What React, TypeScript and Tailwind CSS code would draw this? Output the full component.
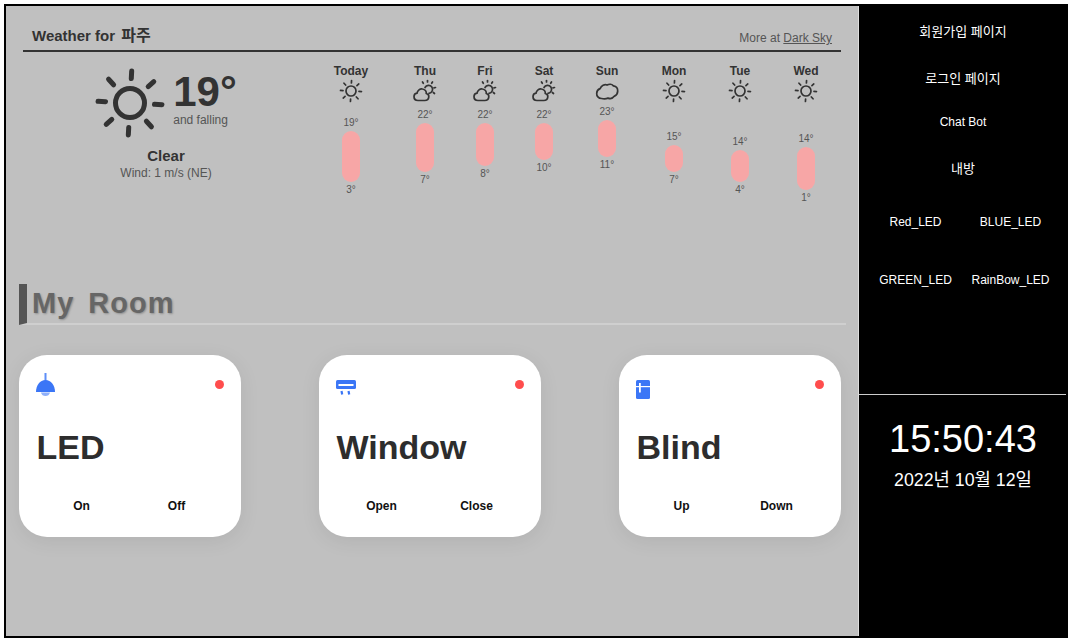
const days = [
  { name: "Today", icon: "sun", hi: "19°", lo: "3°", gap: "ml-0", top: "mt-[14px]", bar: "h-[51px]" },
  { name: "Thu", icon: "partly", hi: "22°", lo: "7°", gap: "ml-[34px]", top: "mt-[6px]", bar: "h-[49px]" },
  { name: "Fri", icon: "partly", hi: "22°", lo: "8°", gap: "ml-[20px]", top: "mt-[6px]", bar: "h-[43px]" },
  { name: "Sat", icon: "partly", hi: "22°", lo: "10°", gap: "ml-[19px]", top: "mt-[6px]", bar: "h-[37px]" },
  { name: "Sun", icon: "cloud", hi: "23°", lo: "11°", gap: "ml-[23px]", top: "mt-[3px]", bar: "h-[37px]" },
  { name: "Mon", icon: "sun", hi: "15°", lo: "7°", gap: "ml-[27px]", top: "mt-[28px]", bar: "h-[27px]" },
  { name: "Tue", icon: "sun", hi: "14°", lo: "4°", gap: "ml-[26px]", top: "mt-[33px]", bar: "h-[32px]" },
  { name: "Wed", icon: "sun", hi: "14°", lo: "1°", gap: "ml-[26px]", top: "mt-[30px]", bar: "h-[43px]" },
];

function BigSun() {
  const rays = [0, 45, 90, 135, 180, 225, 270, 315];
  return (
    <svg width="70" height="70" viewBox="0 0 70 70" fill="none" stroke="#333" strokeLinecap="round">
      <circle cx="35" cy="35" r="14.500" strokeWidth="5" />
      {rays.map((r) => (
        <line key={r} x1="35" y1="3" x2="35" y2="10.500" strokeWidth="5" transform={`rotate(${r + 3} 35 35)`} />
      ))}
    </svg>
  );
}

function DayIcon({ type }: { type: string }) {
  if (type === "sun") {
    return (
      <svg width="24" height="24" viewBox="0 0 24 24" fill="none" stroke="#333" strokeLinecap="round" strokeWidth="1.700">
        <circle cx="12" cy="12" r="5" />
        {[0, 45, 90, 135, 180, 225, 270, 315].map((r) => (
          <line key={r} x1="12" y1="1.500" x2="12" y2="4" transform={`rotate(${r + 3} 12 12)`} />
        ))}
      </svg>
    );
  }
  if (type === "cloud") {
    return (
      <svg width="24" height="24" viewBox="0 0 24 24" fill="none" stroke="#333" strokeWidth="1.700">
        <path d="M6.500 19.500c-3 0-5-2.500-4.800-5.300.1-2.400 1.600-4 3.400-4.600C6.400 6.700 9.500 5 12 6c2.200-1.200 5.200-1 6.500.9 2.600.4 4.300 2.500 4.200 5.200-.1 2.300-1.200 4.200-3.200 5-1.500 2-4 3-6.500 2-2 1-4 1-6.500.4z" />
      </svg>
    );
  }
  return (
    <svg width="24" height="24" viewBox="0 0 24 24" fill="none" stroke="#333" strokeLinecap="round" strokeWidth="1.700">
      <path d="M12 8.500a4 4 0 1 1 4 5.800" />
      <line x1="14.500" y1="1.500" x2="14.500" y2="3" />
      <line x1="9.500" y1="3" x2="10.300" y2="4.300" />
      <line x1="19.500" y1="3" x2="18.700" y2="4.300" />
      <line x1="22.500" y1="8.500" x2="21" y2="8.800" />
      <line x1="21.500" y1="14.500" x2="20.300" y2="13.500" />
      <path d="M5 21.500c-2.500 0-4-1.800-4-3.800 0-2 1.500-3.300 3-3.500.5-2.800 3-4.700 5.500-4.200 2.500.4 4 2.500 3.800 4.500 1.700.5 2.700 1.800 2.500 3.400-.2 2-1.800 3.600-4 3.600z" />
    </svg>
  );
}

function DeviceIcon({ type }: { type: string }) {
  if (type === "lamp") {
    return (
      <svg width="20" height="24" viewBox="0 0 20 24">
        <rect x="8.500" y="0" width="2" height="8" fill="#5d8ef8" />
        <path d="M0 19C0 12 4 7 9.500 7S19 12 19 19z" fill="#3b76f6" />
        <path d="M5 19.500h9c-.5 2.500-2.300 3.500-4.500 3.500S5.500 22 5 19.500z" fill="#8fb0fa" />
      </svg>
    );
  }
  if (type === "ac") {
    return (
      <svg width="21" height="24" viewBox="0 0 21 24">
        <rect x="0" y="7" width="20" height="9" rx="1.500" fill="#3b76f6" />
        <rect x="2.500" y="11" width="15" height="2" fill="#fff" />
        <path d="M5.500 18l.7 3.500M12.500 18l.7 3.500" stroke="#3b76f6" strokeWidth="2.200" />
      </svg>
    );
  }
  return (
    <svg width="20" height="26" viewBox="0 0 20 26">
      <rect x="0" y="7" width="14" height="19" rx="1.500" fill="#3b76f6" />
      <rect x="0" y="13" width="14" height="1.200" fill="#fff" />
      <rect x="3" y="10" width="1.800" height="9.500" fill="#fff" />
    </svg>
  );
}

function Card({ icon, title, a, b }: { icon: string; title: string; a: string; b: string }) {
  return (
    <div className="w-[222px] h-[182px] rounded-[28px] bg-white shadow-[0_4px_20px_rgba(0,0,0,0.08)] pt-[18px]">
      <div className="flex justify-between items-start h-[24px] pl-[17px] pr-[17px]">
        <DeviceIcon type={icon} />
        <span className="mt-[7px] w-[9px] h-[9px] rounded-full bg-[#ff4d4d]" />
      </div>
      <div className="mt-[30px] pl-[17.500px] text-[34px] leading-[40px] font-bold text-[#2d2d2d]">{title}</div>
      <div className="mt-[31px] ml-[15px] grid grid-cols-[95px_95px] text-center text-[12px] leading-[16px] font-bold text-[#111]">
        <span>{a}</span>
        <span>{b}</span>
      </div>
    </div>
  );
}

export default function App() {
  return (
    <div className="w-[1072px] h-[644px] bg-white pt-[4px] pl-[4px] overflow-hidden font-['Liberation_Sans','Noto_Sans_CJK_KR',sans-serif]">
      <div className="w-[1064px] h-[634px] border-2 border-black flex">
        <main className="w-[852px] h-full bg-[#c0c0c0] pl-[13px]">
          <section className="h-[278px] pl-[4px]">
            <div className="w-[818px] h-[46px] border-b-2 border-[#333] flex items-end justify-between pl-[9px] pr-[9px] pb-[5px]">
              <h3 className="text-[15px] leading-[18px] font-bold text-[#333]">
                Weather for <span className="ml-[2px] text-[16px]">파주</span>
              </h3>
              <span className="text-[12px] leading-[14px] text-[#555]">
                More at <span className="underline">Dark Sky</span>
              </span>
            </div>
            <div className="flex">
              <div className="w-[286px] pt-[16px] flex flex-col items-center">
                <div className="flex">
                  <BigSun />
                  <div className="ml-[8px]">
                    <div className="text-[42px] leading-[46px] mt-[1px] font-bold text-[#333]">19°</div>
                    <div className="text-[12px] leading-[14px] mt-[-2px] text-[#555]">and falling</div>
                  </div>
                </div>
                <div className="mt-[9px] text-[15px] leading-[18px] font-bold text-[#333]">Clear</div>
                <div className="text-[12px] leading-[14px] mt-[1px] text-[#555]">Wind: 1 m/s (NE)</div>
              </div>
              <div className="flex ml-[22px] pt-[12px]">
                {days.map((d) => (
                  <div key={d.name} className={`w-[40px] flex flex-col items-center ${d.gap}`}>
                    <div className="text-[12px] leading-[14px] font-bold text-[#333]">{d.name}</div>
                    <div className="mt-[1px]"><DayIcon type={d.icon} /></div>
                    <div className={`${d.top} text-[10px] leading-[12px] mb-[2px] text-[#555]`}>{d.hi}</div>
                    <div className={`w-[18px] rounded-full bg-[#f7a6a6] ${d.bar}`} />
                    <div className="text-[10px] leading-[12px] mt-[2px] text-[#555]">{d.lo}</div>
                  </div>
                ))}
              </div>
            </div>
          </section>
          <h2 className="w-[827px] h-[41px] border-l-8 border-l-[#555] border-b-2 border-b-[#cfcfcf] pl-[5px] text-[29px] leading-[38px] font-bold tracking-[1px] [word-spacing:5px] text-[#666] [text-shadow:1px_1px_2px_rgba(0,0,0,0.25)]">
            My Room
          </h2>
          <div className="mt-[30px] flex gap-[78px]">
            <Card icon="lamp" title="LED" a="On" b="Off" />
            <Card icon="ac" title="Window" a="Open" b="Close" />
            <Card icon="fridge" title="Blind" a="Up" b="Down" />
          </div>
        </main>
        <aside className="flex-1 h-full bg-black border-l border-l-[#ddd] text-white">
          <div className="h-[389px] border-b border-b-[#ccc] pl-[1px] text-[12px] leading-[14px] text-center">
            <div className="pt-[19px] text-[13px]">회원가입 페이지</div>
            <div className="mt-[33px] text-[13px]">로그인 페이지</div>
            <div className="mt-[29px]">Chat Bot</div>
            <div className="mt-[33px] text-[13px]">내방</div>
            <div className="mt-[39px] grid grid-cols-[95px_95px] ml-[8px]">
              <span>Red_LED</span>
              <span>BLUE_LED</span>
            </div>
            <div className="mt-[44px] grid grid-cols-[95px_95px] ml-[8px] whitespace-nowrap">
              <span>GREEN_LED</span>
              <span>RainBow_LED</span>
            </div>
          </div>
          <div className="pl-[1px] text-center">
            <div className="mt-[22px] text-[38px] leading-[44px]">15:50:43</div>
            <div className="mt-[7px] text-[17.750px] leading-[24px]">2022년 10월 12일</div>
          </div>
        </aside>
      </div>
    </div>
  );
}
